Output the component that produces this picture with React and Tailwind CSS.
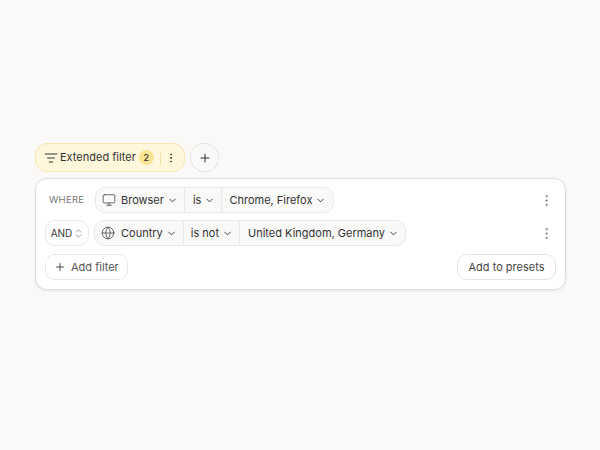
import { ChevronDown, ChevronsUpDown, EllipsisVertical, Globe, ListFilter, Monitor, Plus } from 'lucide-react';

function Segment({ children, className = '' }) {
  return (
    <div className={`flex h-[24px] items-center gap-[3px] whitespace-nowrap border-r border-[#e8e8e6] pr-[6px] last:border-r-0 ${className}`}>
      {children}
      <ChevronDown size={11} strokeWidth={2} className="text-[#333]" />
    </div>
  );
}

function RowMenu() {
  return (
    <div className="ml-auto flex w-[20px] justify-center text-[#777]">
      <EllipsisVertical size={15} strokeWidth={1.5} />
    </div>
  );
}

export default function App() {
  return (
    <div className="h-[450px] w-[600px] bg-[#faf9f7] px-[35px] pt-[143px] text-[11px] text-[#333] [font-family:Inter,sans-serif]">
      <div className="flex items-center gap-[5px]">
        <div className="flex h-[29px] w-[150px] items-center whitespace-nowrap rounded-[12px] border border-[#f6e8b0] bg-[#fef7dc] pl-[8px]">
          <ListFilter size={14} strokeWidth={1.75} />
          <span className="ml-[2px]">Extended filter</span>
          <span className="ml-[3px] flex h-[15px] w-[15px] items-center justify-center rounded-full bg-[#fbe595] text-[9px] font-medium">2</span>
          <span className="ml-[6px] h-[14px] w-px bg-[#f3e3a6]" />
          <EllipsisVertical size={12} strokeWidth={2} className="ml-[4px]" />
        </div>
        <div className="flex h-[29px] w-[29px] items-center justify-center rounded-full border border-dotted border-[#cfcfcd]">
          <Plus size={14} strokeWidth={1.75} />
        </div>
      </div>

      <div className="mt-[6px] h-[112px] w-[531px] rounded-[12px] border border-[#dededc] bg-white px-[9px] pt-[8px] shadow-[0_1px_3px_rgba(0,0,0,0.08)]">
        <div className="flex items-center">
          <span className="w-[50px] pl-[4px] text-[9.5px] tracking-[0.25px] text-[#777]">WHERE</span>
          <div className="flex rounded-[10px] border border-[#e8e8e6] bg-[#f9f9f8]">
            <Segment className="pl-[6px]">
              <Monitor size={14} strokeWidth={1.5} className="mr-[2px] text-[#555]" />
              Browser
            </Segment>
            <Segment className="pl-[8px]">is</Segment>
            <Segment className="pl-[7px] pr-[7px]">Chrome, Firefox</Segment>
          </div>
          <RowMenu />
        </div>

        <div className="mt-[7px] flex items-center">
          <div className="mr-[5px] flex h-[26px] w-[44px] items-center justify-center rounded-[10px] border border-[#e8e8e6] pl-[1px] text-[10px]">
            AND
            <ChevronsUpDown size={11} strokeWidth={1.5} className="ml-[1px] text-[#666]" />
          </div>
          <div className="flex rounded-[10px] border border-[#e8e8e6] bg-[#f9f9f8]">
            <Segment className="pl-[6px]">
              <Globe size={14} strokeWidth={1.5} className="mr-[3px] text-[#555]" />
              Country
            </Segment>
            <Segment className="pl-[7px]">is not</Segment>
            <Segment className="pl-[8px]">United Kingdom, Germany</Segment>
          </div>
          <RowMenu />
        </div>

        <div className="mt-[8px] flex items-center justify-between">
          <div className="flex h-[26px] w-[83px] items-center whitespace-nowrap rounded-[10px] border border-dotted border-[#cfcfcd] pl-[8px] text-[#555]">
            <Plus size={12} strokeWidth={1.75} className="mr-[5px] text-[#333]" />
            Add filter
          </div>
          <div className="flex h-[26px] w-[99px] items-center justify-center whitespace-nowrap rounded-[10px] border border-[#e4e4e2] text-[#444]">
            Add to presets
          </div>
        </div>
      </div>
    </div>
  );
}
